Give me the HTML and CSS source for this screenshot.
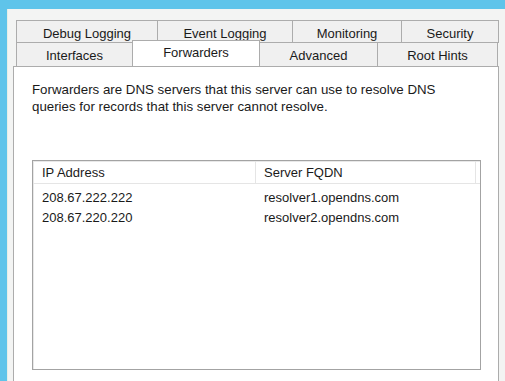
FILE: index.html
```html
<!DOCTYPE html>
<html>
<head>
<meta charset="utf-8">
<link rel="stylesheet" href="styles.css">
</head>
<body>
<div class="window">
  <div class="tabs">
    <div class="row row-top">
      <div class="tab w141">Debug Logging</div>
      <div class="tab w135">Event Logging</div>
      <div class="tab w109">Monitoring</div>
      <div class="tab w97">Security</div>
    </div>
    <div class="row row-bottom">
      <div class="tab w116">Interfaces</div>
      <div class="tab w127 selected">Forwarders</div>
      <div class="tab w118">Advanced</div>
      <div class="tab w121">Root Hints</div>
    </div>
  </div>
  <div class="panel">
    <p class="desc">Forwarders are DNS servers that this server can use to resolve DNS<br>queries for records that this server cannot resolve.</p>
    <div class="list">
      <div class="list-head">
        <div class="col c1">IP Address</div>
        <div class="col c2">Server FQDN</div>
        <div class="col c3"></div>
      </div>
      <div class="list-row">
        <div class="col c1">208.67.222.222</div>
        <div class="col c2">resolver1.opendns.com</div>
      </div>
      <div class="list-row">
        <div class="col c1">208.67.220.220</div>
        <div class="col c2">resolver2.opendns.com</div>
      </div>
    </div>
  </div>
</div>
</body>
</html>
```
FILE: styles.css
```css
html, body {
  margin: 0;
  padding: 0;
  height: 100%;
}
body {
  background: #5fc4ea;
  font-family: "Liberation Sans", Arial, sans-serif;
  font-size: 13px;
  color: #1a1a1a;
  overflow: hidden;
}
.window {
  margin: 9px 0 0 7px;
  height: calc(100% - 9px);
  background: #f3f4f3;
  border-left: 1px solid #e6efe6;
  box-sizing: border-box;
  padding: 11px 0 0 7px;
  display: flex;
  flex-direction: column;
}
.tabs {
  padding-left: 1px;
  display: flex;
  flex-direction: column;
  position: relative;
  z-index: 2;
}
.row {
  display: flex;
}
.tab {
  box-sizing: border-box;
  border: 1px solid #acacac;
  border-right: none;
  background: #f0f0f0;
  display: flex;
  align-items: center;
  justify-content: center;
  white-space: nowrap;
}
.tab:last-child {
  border-right: 1px solid #acacac;
}
.row-top .tab {
  height: 23px;
  padding-top: 3px;
}
.row-bottom .tab {
  height: 23px;
  border-top: none;
  border-bottom: none;
  padding-top: 2px;
}
.tab.selected {
  background: #ffffff;
  height: 26px;
  margin-top: -3px;
  border-top: 1px solid #acacac;
  border-right: 1px solid #acacac;
  margin-right: -1px;
  padding-top: 0;
  padding-bottom: 3px;
  position: relative;
  z-index: 3;
}
.w141 { width: 141px; }
.w135 { width: 135px; }
.w109 { width: 109px; }
.w97 { width: 98px; }
.w116 { width: 116px; }
.w127 { width: 128px; }
.w118 { width: 118px; }
.w121 { width: 121px; }
.panel {
  flex: 1;
  width: 486px;
  box-sizing: border-box;
  background: #ffffff;
  border: 1px solid #acacac;
  border-bottom: none;
  margin-left: -2px;
  padding: 14px 0 0 18px;
  position: relative;
  z-index: 1;
}
.desc {
  margin: 0;
  font-size: 13.3px;
  line-height: 17px;
  color: #1a1a1a;
}
.list {
  margin-top: 45px;
  width: 449px;
  height: 210px;
  box-sizing: border-box;
  border: 1px solid #a3a3a3;
  box-shadow: inset 1px 1px 0 #e8e8e8;
  background: #fff;
}
.list-head {
  display: flex;
  height: 23px;
  border-bottom: 1px solid #e5e5e5;
  box-sizing: border-box;
  align-items: center;
}
.list-head .col {
  height: 100%;
  display: flex;
  align-items: center;
  box-sizing: border-box;
  padding-top: 1px;
}
.list-head .c1, .list-head .c2 {
  border-right: 1px solid #e5e5e5;
}
.list-row {
  display: flex;
  height: 20px;
  align-items: center;
}
.col {
  white-space: nowrap;
  box-sizing: border-box;
}
.c1 {
  width: 223px;
  padding-left: 9px;
}
.c2 {
  width: 220px;
  padding-left: 8px;
}
.c3 {
  flex: 1;
}
.list-head + .list-row {
  margin-top: 3px;
}
```
